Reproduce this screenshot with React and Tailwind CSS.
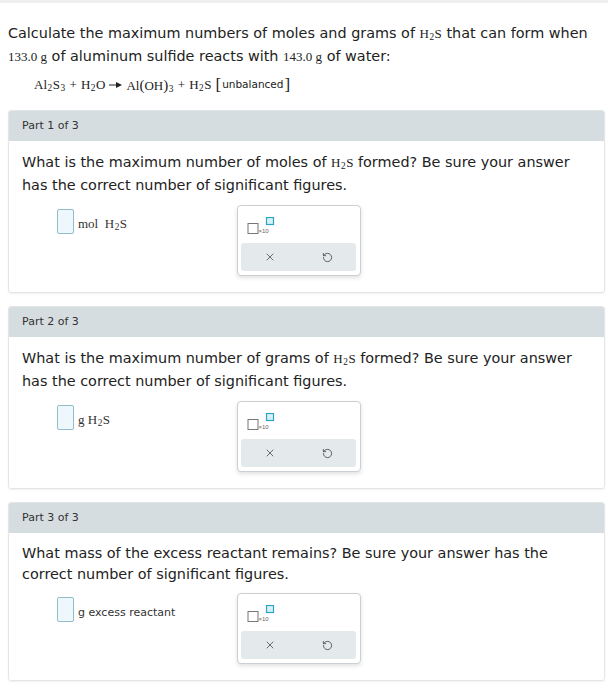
import { X, RotateCcw } from 'lucide-react'

const serif = "font-['Liberation_Serif','Times_New_Roman',serif]"

const Sub = ({ children }) => <sub className="text-[0.72em] relative top-[0.2em] align-baseline leading-none mx-[0.5px]">{children}</sub>

const H2S = ({ cls = 'text-[13px]' }) => (
  <span className={`${serif} ${cls}`}>H<Sub>2</Sub>S</span>
)

function SciIcon() {
  return (
    <svg width="28" height="18" viewBox="0 0 28 18">
      <rect x="1" y="6.5" width="10" height="10" fill="#fff" stroke="#777" strokeWidth="1" />
      <text x="11.5" y="16" fontSize="6" fill="#666" fontFamily="Liberation Sans, sans-serif">×10</text>
      <rect x="19.5" y="0.5" width="7" height="7" fill="#d8f1f7" stroke="#2aa6c4" strokeWidth="1.2" />
    </svg>
  )
}

function Widget() {
  return (
    <div className="w-[124px] h-[71px] flex flex-col border border-[#c9cfd2] rounded-[4px] bg-white shadow-[0_2px_4px_rgba(0,0,0,0.12)] p-[3px] pr-[4px] pb-[4px]">
      <div className="h-[34px] pl-[6px] pt-[8px]"><SciIcon /></div>
      <div className="flex-1 bg-[#e4e9eb] rounded-[3px] flex items-center justify-around">
        <X className="w-[12px] h-[12px] text-[#555]" strokeWidth={1.7} />
        <RotateCcw className="w-[11px] h-[11px] text-[#555]" strokeWidth={2} />
      </div>
    </div>
  )
}

function Part({ n, question, unit, leading = 'leading-[23px]' }) {
  return (
    <div className="ml-2 mr-[3px] border border-[#e3e5e6] rounded-[3px] shadow-[0_1px_2px_rgba(0,0,0,0.06)] overflow-hidden">
      <div className="h-[30px] bg-[#d6dde0] pl-[13px] flex items-center text-[11px] text-[#333]">Part {n} of 3</div>
      <div className="px-[13px] pt-[10px] pb-[16px]">
        <p className={`text-[14.4px] ${leading} text-[#222]`}>{question}</p>
        <div className="flex mt-[8px] pl-[35px]">
          <div className="w-[180px] flex items-start pt-[4px] gap-[4px]">
            <div className="w-[17px] h-[25px] bg-[#eef7fb] border border-[#93bccb] rounded-[2px]" />
            <div className="pt-[2px]">{unit}</div>
          </div>
          <Widget />
        </div>
      </div>
    </div>
  )
}

export default function App() {
  return (
    <div className="bg-white min-h-[700px] font-['DejaVu_Sans',Verdana,sans-serif] text-[#222]">
      <div className="h-[3px] bg-[#efefef]" />
      <div className="px-2 pt-[19px] text-[14.4px] leading-[23px]">
        <p>Calculate the maximum numbers of moles and grams of <H2S /> that can form when</p>
        <p><span className={`${serif} text-[13px]`}>133.0 g</span> of aluminum sulfide reacts with <span className={`${serif} text-[13px]`}>143.0 g</span> of water:</p>
      </div>
      <div className={`pl-[34px] pt-[3px] h-[31px] text-[13px] ${serif} flex items-center gap-[4px]`}>
        <span>Al<Sub>2</Sub>S<Sub>3</Sub></span>
        <span>+</span>
        <span>H<Sub>2</Sub>O</span>
        <svg width="13" height="8" viewBox="0 0 13 8"><line x1="0" y1="4" x2="8" y2="4" stroke="#222" strokeWidth="1" /><polygon points="7,1 13,4 7,7" fill="#222" /></svg>
        <span>Al<span className="text-[15px]">(</span>OH<span className="text-[15px]">)</span><Sub>3</Sub></span>
        <span>+</span>
        <span>H<Sub>2</Sub>S</span>
        <span className="flex items-center"><span className="text-[17px]">[</span><span className="font-['DejaVu_Sans',sans-serif] text-[10.5px] px-[1px]">unbalanced</span><span className="text-[17px]">]</span></span>
      </div>
      <div className="mt-[11px] flex flex-col gap-[13px] pb-5">
        <Part n={1}
          question={<>What is the maximum number of moles of <H2S /> formed? Be sure your answer has the correct number of significant figures.</>}
          unit={<span className={`${serif} text-[13px] text-[#333]`}>mol&nbsp; H<Sub>2</Sub>S</span>} />
        <Part n={2}
          question={<>What is the maximum number of grams of <H2S /> formed? Be sure your answer has the correct number of significant figures.</>}
          unit={<span className={`${serif} text-[13px] text-[#333]`}>g H<Sub>2</Sub>S</span>} />
        <Part n={3} leading="leading-[21px]"
          question={<>What mass of the excess reactant remains? Be sure your answer has the correct number of significant figures.</>}
          unit={<span className="text-[11px] text-[#333]">g excess reactant</span>} />
      </div>
    </div>
  )
}
